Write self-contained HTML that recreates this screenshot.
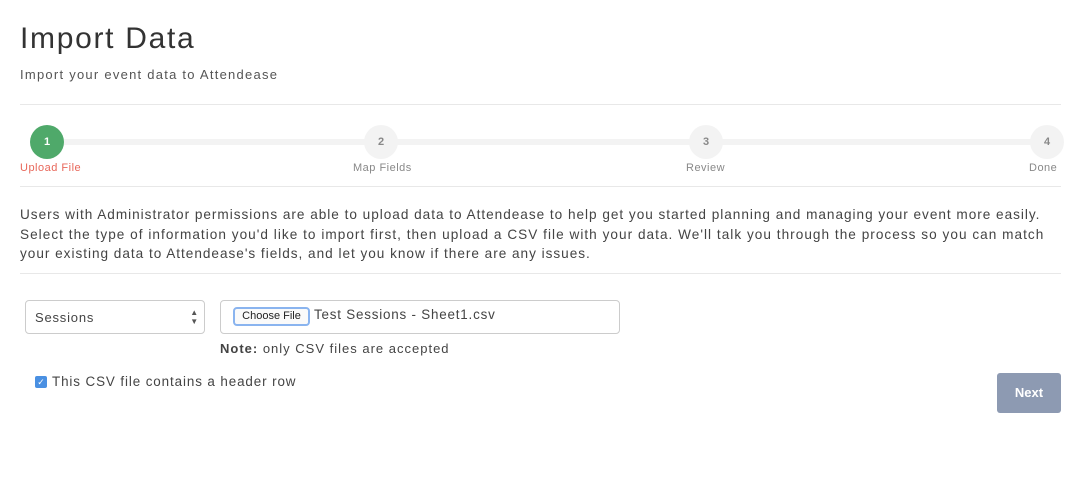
<!DOCTYPE html>
<html><head><style>
*{box-sizing:border-box;margin:0;padding:0}
body{width:1087px;height:496px;background:#fff;font-family:"Liberation Sans",sans-serif;color:#333;position:relative;overflow:hidden}
.a{position:absolute;white-space:nowrap}
.hr{position:absolute;left:20px;width:1041px;height:1px;background:#e8e8e8}
.c{position:absolute;top:125px;width:34px;height:34px;border-radius:50%;background:#f3f3f3;color:#888;font-size:11px;font-weight:bold;text-align:center;line-height:34px}
.l{position:absolute;top:162px;font-size:11px;color:#888;letter-spacing:0.5px}
.p{position:absolute;left:20px;font-size:13.6px;color:#444;white-space:nowrap}
</style></head><body>
<div class="a" style="left:20px;top:22px;font-size:30px;color:#333;letter-spacing:1.7px">Import Data</div>
<div class="a" style="left:20px;top:67px;font-size:13px;color:#555;letter-spacing:1.25px">Import your event data to Attendease</div>
<div class="hr" style="top:104px"></div>
<div style="position:absolute;left:47px;top:139px;width:1000px;height:6px;background:#f3f3f3"></div>
<div class="c" style="left:30px;background:#4fa96a;color:#fff">1</div>
<div class="c" style="left:364px">2</div>
<div class="c" style="left:689px">3</div>
<div class="c" style="left:1030px">4</div>
<div class="l" style="left:20px;color:#e8675a">Upload File</div>
<div class="l" style="left:353px">Map Fields</div>
<div class="l" style="left:686px">Review</div>
<div class="l" style="left:1029px">Done</div>
<div class="hr" style="top:186px"></div>
<div class="p" style="top:207px;letter-spacing:0.98px">Users with Administrator permissions are able to upload data to Attendease to help get you started planning and managing your event more easily.</div>
<div class="p" style="top:227px;letter-spacing:1.03px">Select the type of information you'd like to import first, then upload a CSV file with your data. We'll talk you through the process so you can match</div>
<div class="p" style="top:246px;letter-spacing:0.98px">your existing data to Attendease's fields, and let you know if there are any issues.</div>
<div class="hr" style="top:273px"></div>
<div style="position:absolute;left:25px;top:300px;width:180px;height:34px;border:1px solid #ccc;border-radius:4px;font-size:13px;padding:9px 9px;color:#444;letter-spacing:0.8px">Sessions<span style="position:absolute;right:5px;top:7px;font-size:8px;line-height:9px;color:#555">▲<br>▼</span></div>
<div style="position:absolute;left:220px;top:300px;width:400px;height:34px;border:1px solid #ccc;border-radius:4px"></div>
<div class="a" style="left:233px;top:307px;width:77px;height:19px;border:2px solid #8ab4ef;border-radius:4px;background:#fafafa;font-size:11px;text-align:center;line-height:15px;color:#222">Choose File</div>
<div class="a" style="left:314px;top:307px;font-size:13.4px;color:#444;letter-spacing:0.8px">Test Sessions - Sheet1.csv</div>
<div class="a" style="left:220px;top:341px;font-size:13px;color:#444;letter-spacing:1px"><b>Note:</b> only CSV files are accepted</div>
<div class="a" style="left:35px;top:376px;width:12px;height:12px;background:#4a90e2;border-radius:2px;color:#fff;font-size:9px;text-align:center;line-height:12px">✓</div>
<div class="a" style="left:52px;top:374px;font-size:13.4px;color:#444;letter-spacing:0.9px">This CSV file contains a header row</div>
<div class="a" style="left:997px;top:373px;width:64px;height:40px;background:#8d9ab2;border-radius:3px;color:#fff;font-size:13px;font-weight:bold;text-align:center;line-height:40px">Next</div>
</body></html>
